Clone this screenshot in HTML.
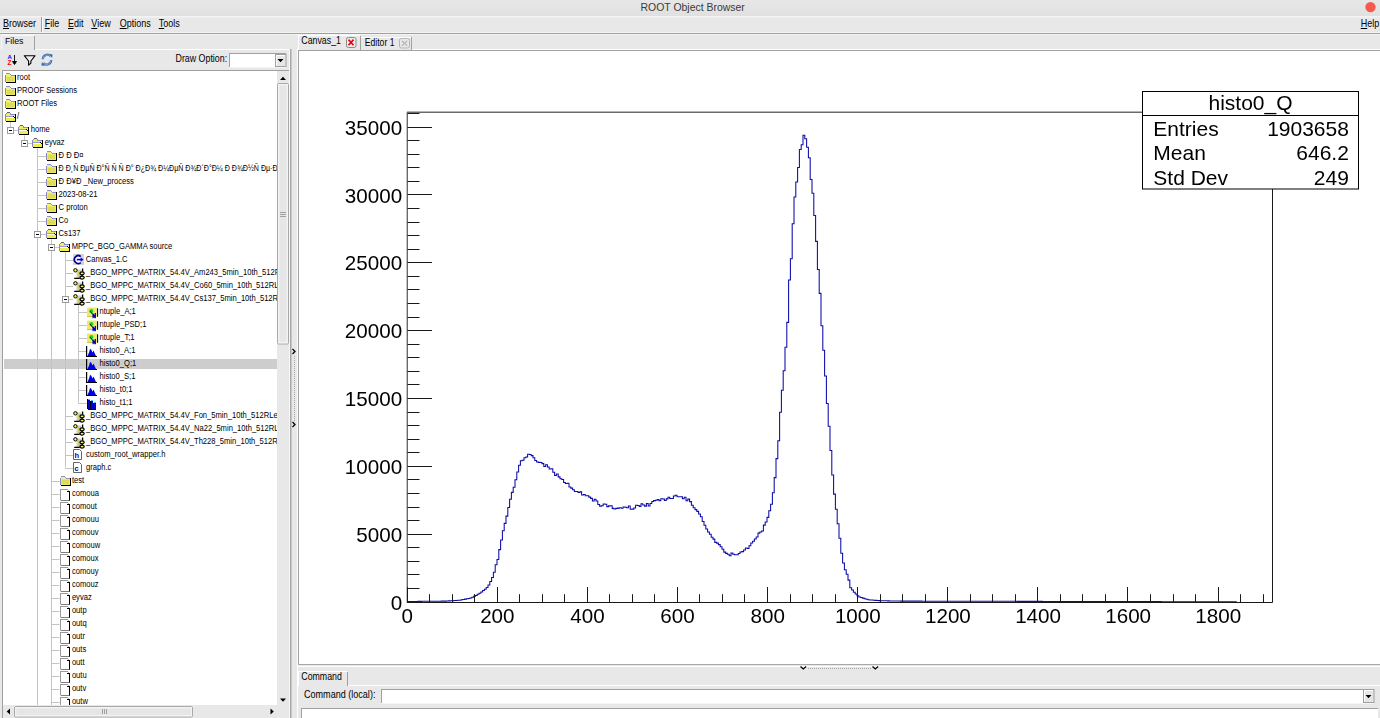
<!DOCTYPE html>
<html><head><meta charset="utf-8"><title>ROOT Object Browser</title>
<style>html,body{margin:0;padding:0;width:1380px;height:718px;overflow:hidden;background:#e8e8e8}</style>
</head><body>
<svg width="1380" height="718" viewBox="0 0 1380 718" style="position:absolute;left:0;top:0;font-family:'Liberation Sans',sans-serif">
<defs>
<linearGradient id="tb" x1="0" y1="0" x2="0" y2="1"><stop offset="0" stop-color="#e7e7e7"/><stop offset="1" stop-color="#e0e0e0"/></linearGradient>
<symbol id="fc" viewBox="0 0 11 10" shape-rendering="crispEdges"><rect x="0" y="2" width="1" height="7" fill="#8a8ac0"/><rect x="1" y="0" width="4" height="1" fill="#9090c4"/><rect x="5" y="1" width="1" height="1" fill="#9090c4"/><rect x="6" y="2" width="4" height="1" fill="#9090c4"/><rect x="1" y="1" width="4" height="1" fill="#eeee70"/><rect x="1" y="2" width="5" height="1" fill="#f2f290"/><rect x="1" y="3" width="9" height="6" fill="#eaea62"/><rect x="2" y="4" width="7" height="4" fill="#dcdc5a"/><rect x="10" y="2" width="1" height="8" fill="#000"/><rect x="1" y="9" width="10" height="1" fill="#000"/></symbol>
<symbol id="fo" viewBox="0 0 11 10" shape-rendering="crispEdges"><rect x="2" y="0" width="3" height="1" fill="#606070"/><rect x="1" y="1" width="1" height="1" fill="#8a8ac0"/><rect x="2" y="1" width="3" height="1" fill="#eeee70"/><rect x="5" y="1" width="1" height="1" fill="#8a8ac0"/><rect x="0" y="2" width="1" height="7" fill="#8a8ac0"/><rect x="1" y="2" width="4" height="2" fill="#eeee60"/><rect x="5" y="2" width="5" height="1" fill="#8a8ac0"/><rect x="5" y="3" width="5" height="1" fill="#eeee60"/><rect x="1" y="4" width="8" height="1" fill="#9a9ad0"/><rect x="1" y="5" width="8" height="1" fill="#fbfbf0"/><rect x="1" y="6" width="9" height="3" fill="#eeee50"/><rect x="10" y="2" width="1" height="8" fill="#000"/><rect x="8" y="4" width="1" height="1" fill="#000"/><rect x="9" y="5" width="1" height="1" fill="#000"/><rect x="1" y="9" width="10" height="1" fill="#000"/></symbol>
<symbol id="mb" viewBox="0 0 7 7" shape-rendering="crispEdges"><rect x="0" y="0" width="7" height="7" fill="#9a9a9a"/><rect x="1" y="1" width="5" height="5" fill="#fff"/><rect x="2" y="3" width="3" height="1" fill="#000"/></symbol>
<symbol id="rf" viewBox="0 0 14 12"><rect x="3.5" y="1.5" width="5" height="9" fill="#d0d0d0"/><path d="M4 2.5Q6 3.5 6 6V10" stroke="#c8c830" stroke-width="1" fill="none"/><circle cx="2.4" cy="2.3" r="1.7" fill="#f0f050" stroke="#000" stroke-width="1"/><ellipse cx="9.1" cy="5.3" rx="2.1" ry="1.5" fill="#f0f050" stroke="#000" stroke-width="1.2"/><ellipse cx="9.1" cy="9.6" rx="2.1" ry="1.5" fill="#f0f050" stroke="#000" stroke-width="1.2"/><path d="M9.6 0.6v3.2 M9.1 6.8v1.4 M1.2 10.3h5.5" stroke="#000" stroke-width="1.3"/></symbol>
<symbol id="nt" viewBox="0 0 12 12"><rect x="0.2" y="0.8" width="10" height="9.5" fill="#eaea70"/><rect x="0.2" y="9.3" width="9" height="1" fill="#c8c840"/><circle cx="4.6" cy="4.3" r="2.1" fill="#20d020"/><path d="M3.6 4.6l2.6 3.4" stroke="#000" stroke-width="1"/><path d="M6.4 7v4.5M8.6 6.2v5.3M6.4 7l2.2 4.5" stroke="#0000c8" stroke-width="1.3"/><path d="M10.9 1.5v8.5" stroke="#000" stroke-width="1.1"/></symbol>
<symbol id="hi" viewBox="0 0 12 11"><rect x="0" y="0" width="1.2" height="11" fill="#000"/><rect x="0" y="10" width="11" height="1" fill="#000"/><path d="M1.5 10L3 6.5 4 3 5.2 3.5 6.5 6.5 7.5 4.5 8.8 7.5 10 10z" fill="#0000e8"/></symbol>
<symbol id="h2" viewBox="0 0 12 12" shape-rendering="crispEdges"><rect x="2" y="11" width="8" height="1" fill="#000"/><rect x="1" y="1" width="1" height="10" fill="#000"/><rect x="2" y="1" width="2" height="10" fill="#0000d0"/><rect x="5" y="2" width="2" height="9" fill="#0000e0"/><rect x="8" y="4" width="2" height="7" fill="#0000d0"/><rect x="2" y="1" width="2" height="1" fill="#30c8ff"/><rect x="5" y="2" width="2" height="1" fill="#30c8ff"/><rect x="8" y="4" width="2" height="1" fill="#30c8ff"/><rect x="4" y="3" width="1" height="8" fill="#000"/><rect x="7" y="5" width="1" height="6" fill="#000"/></symbol>
<symbol id="cc" viewBox="0 0 11 11"><rect x="0" y="0" width="11" height="11" fill="#d4d4d4"/><path d="M7.8 2.6A3.9 3.9 0 1 0 7.8 8.6" fill="#fff" stroke="#00009a" stroke-width="1.7"/><path d="M3.8 5.6h4.5" stroke="#0000ff" stroke-width="1.6"/><path d="M7.6 3.4l3 2.2-3 2.2z" fill="#0000ff"/></symbol>
<symbol id="hf" viewBox="0 0 9 11"><path d="M0.5 0.5h6l2 2v8h-8z" fill="#fff" stroke="#555" stroke-width="0.9"/><text x="1.6" y="8.8" font-size="7.5" fill="#0000a0" font-family="Liberation Sans" font-weight="bold">h</text></symbol>
<symbol id="cf" viewBox="0 0 9 11"><path d="M0.5 0.5h6l2 2v8h-8z" fill="#fff" stroke="#555" stroke-width="0.9"/><text x="1.6" y="8.8" font-size="7.5" fill="#0000a0" font-family="Liberation Sans" font-weight="bold">c</text></symbol>
<symbol id="df" viewBox="0 0 10 12" shape-rendering="crispEdges"><rect x="1" y="1" width="8" height="10" fill="#fff"/><rect x="0" y="0" width="1" height="12" fill="#9a9a9a"/><rect x="1" y="0" width="7" height="1" fill="#9a9a9a"/><rect x="8" y="1" width="1" height="1" fill="#b0b0b0"/><rect x="7" y="2" width="2" height="1" fill="#000"/><rect x="9" y="2" width="1" height="10" fill="#000"/><rect x="1" y="11" width="9" height="1" fill="#000"/></symbol>
</defs>
<rect x="0" y="0" width="1380" height="718" fill="#e8e8e8"/>
<rect x="0" y="0" width="1380" height="16" fill="url(#tb)"/>
<rect x="0" y="16" width="1380" height="1" fill="#f3f3f3"/>
<rect x="0" y="17" width="1380" height="1" fill="#efefef"/>
<text x="640.5" y="10.8" font-size="11.1" fill="#3a3a3a" text-anchor="start"  textLength="104.33" lengthAdjust="spacingAndGlyphs">ROOT Object Browser</text>
<circle cx="1370.5" cy="7.1" r="5.2" fill="#f45b4c"/>
<text x="3" y="27.2" font-size="10.3" fill="#000" text-anchor="start"  textLength="33.01" lengthAdjust="spacingAndGlyphs">Browser</text>
<text x="44.7" y="27.2" font-size="10.3" fill="#000" text-anchor="start"  textLength="14.50" lengthAdjust="spacingAndGlyphs">File</text>
<text x="68" y="27.2" font-size="10.3" fill="#000" text-anchor="start"  textLength="15.51" lengthAdjust="spacingAndGlyphs">Edit</text>
<text x="91.3" y="27.2" font-size="10.3" fill="#000" text-anchor="start"  textLength="19.34" lengthAdjust="spacingAndGlyphs">View</text>
<text x="119.7" y="27.2" font-size="10.3" fill="#000" text-anchor="start"  textLength="31.02" lengthAdjust="spacingAndGlyphs">Options</text>
<text x="158.7" y="27.2" font-size="10.3" fill="#000" text-anchor="start"  textLength="21.01" lengthAdjust="spacingAndGlyphs">Tools</text>
<text x="1360.7" y="27.2" font-size="10.3" fill="#000" text-anchor="start"  textLength="18.51" lengthAdjust="spacingAndGlyphs">Help</text>
<rect x="3" y="28" width="6" height="1" fill="#000"/>
<rect x="44.7" y="28" width="5.0" height="1" fill="#000"/>
<rect x="68" y="28" width="5.5" height="1" fill="#000"/>
<rect x="91.3" y="28" width="6.0" height="1" fill="#000"/>
<rect x="119.7" y="28" width="7.0" height="1" fill="#000"/>
<rect x="158.7" y="28" width="5.5" height="1" fill="#000"/>
<rect x="1360.7" y="28" width="6.5" height="1" fill="#000"/>
<rect x="41" y="17" width="1" height="16" fill="#a0a0a0"/>
<rect x="42" y="17" width="1" height="16" fill="#ffffff"/>
<rect x="0" y="32" width="1380" height="1" fill="#f2f2f2"/>
<rect x="0" y="33" width="1380" height="1" fill="#a0a0a0"/>
<rect x="0" y="34" width="1380" height="1" fill="#f4f4f4"/>
<rect x="2" y="35" width="33" height="15" fill="#e8e8e8"/>
<rect x="2" y="35" width="32" height="1" fill="#f8f8f8"/>
<rect x="1" y="36" width="1" height="14" fill="#f6f6f6"/>
<rect x="34" y="36" width="1" height="14" fill="#a0a0a0"/>
<text x="5" y="43.7" font-size="9.5" fill="#000" text-anchor="start"  textLength="18.47" lengthAdjust="spacingAndGlyphs">Files</text>
<rect x="35" y="49" width="254" height="1" fill="#ffffff"/>
<text x="7.5" y="59" font-size="6" fill="#0000ff" font-weight="bold">A</text><text x="7.5" y="65" font-size="6.5" fill="#ff0000" font-weight="bold">Z</text>
<path d="M14.5 55v9M12.5 61.5l2 3 2-3z" stroke="#000" stroke-width="0.9" fill="#000"/>
<path d="M24.3 55.7h10.8l-4.2 5.3v2.2l-2.3 2v-4.2z" fill="#f0f0f0" stroke="#000" stroke-width="1.1" stroke-linejoin="round"/>
<g fill="none" stroke="#2a62b0" stroke-width="2.2"><path d="M42.8 59.3a4.6 4.6 0 0 1 8-3"/><path d="M51.2 60a4.6 4.6 0 0 1-8 3"/></g><g fill="none" stroke="#cfe0f4" stroke-width="0.6"><path d="M42.8 59.3a4.6 4.6 0 0 1 8-3"/><path d="M51.2 60a4.6 4.6 0 0 1-8 3"/></g><path d="M49.5 54.2l3 0.2-0.4 3.6z M44.5 65.8l-3-0.2 0.4-3.6z" fill="#2a62b0"/>
<text x="175.5" y="61.8" font-size="10.6" fill="#000" text-anchor="start"  textLength="51.64" lengthAdjust="spacingAndGlyphs">Draw Option:</text>
<rect x="229" y="53.5" width="57" height="14" fill="#ffffff"/>
<rect x="229" y="53" width="57" height="1" fill="#a0a0a0"/>
<rect x="229" y="53" width="1" height="14" fill="#a0a0a0"/>
<rect x="275.5" y="54.5" width="10.5" height="12" fill="#e6e6e6" stroke="#a0a0a0" stroke-width="1"/><path d="M276.5 65.5V55.5H285" stroke="#fff" stroke-width="1" fill="none"/>
<path d="M277.5 59h6l-3 3.3z" fill="#000"/>
<rect x="2" y="70" width="287" height="1" fill="#a0a0a0"/>
<rect x="2" y="70" width="1" height="648" fill="#a0a0a0"/>
<rect x="3" y="71" width="274" height="634" fill="#ffffff"/>
<rect x="277" y="71" width="12" height="634" fill="#e8e8e8"/>
<path d="M280 80h6l-3-3.3z" fill="#000"/>
<rect x="277.5" y="83.5" width="11" height="260.5" rx="1.2" fill="#e6e6e6" stroke="#a8a8a8" stroke-width="1"/><rect x="278.8" y="84.8" width="8.4" height="258" fill="none" stroke="#fafafa" stroke-width="0.9"/>
<rect x="280" y="212" width="6" height="1" fill="#a0a0a0"/>
<rect x="280" y="214" width="6" height="1" fill="#a0a0a0"/>
<rect x="280" y="216" width="6" height="1" fill="#a0a0a0"/>
<path d="M280 698.5h6l-3 3.3z" fill="#000"/>
<rect x="3" y="705" width="286" height="13" fill="#e8e8e8"/>
<path d="M10 708.5l-3.3 3 3.3 3z" fill="#000"/>
<path d="M270.5 708.5l3.3 3-3.3 3z" fill="#000"/>
<rect x="14.5" y="706.5" width="178" height="10.5" rx="1.2" fill="#e6e6e6" stroke="#a8a8a8" stroke-width="1"/><rect x="15.8" y="707.8" width="175.5" height="8" fill="none" stroke="#fafafa" stroke-width="0.9"/>
<rect x="102" y="709" width="1" height="5" fill="#a0a0a0"/>
<rect x="104" y="709" width="1" height="5" fill="#a0a0a0"/>
<rect x="106" y="709" width="1" height="5" fill="#a0a0a0"/>
<g clip-path="url(#treeclip)">
<clipPath id="treeclip"><rect x="3" y="71" width="274" height="634"/></clipPath>
<rect x="4" y="359" width="273" height="10" fill="#cdcdcd"/>
<rect x="24" y="135.5" width="1" height="7.0" fill="#c4c4c4"/>
<rect x="37" y="148.5" width="1" height="569.5" fill="#c4c4c4"/>
<rect x="51" y="239.5" width="1" height="478.5" fill="#c4c4c4"/>
<rect x="65" y="252.5" width="1" height="215.0" fill="#c4c4c4"/>
<rect x="78" y="304.5" width="1" height="98.0" fill="#c4c4c4"/>
<rect x="10" y="130" width="8" height="1" fill="#c4c4c4"/>
<rect x="24" y="143" width="8" height="1" fill="#c4c4c4"/>
<rect x="37" y="156" width="9" height="1" fill="#c4c4c4"/>
<rect x="37" y="169" width="9" height="1" fill="#c4c4c4"/>
<rect x="37" y="182" width="9" height="1" fill="#c4c4c4"/>
<rect x="37" y="195" width="9" height="1" fill="#c4c4c4"/>
<rect x="37" y="208" width="9" height="1" fill="#c4c4c4"/>
<rect x="37" y="221" width="9" height="1" fill="#c4c4c4"/>
<rect x="37" y="234" width="9" height="1" fill="#c4c4c4"/>
<rect x="51" y="247" width="8.5" height="1" fill="#c4c4c4"/>
<rect x="65" y="260" width="8" height="1" fill="#c4c4c4"/>
<rect x="65" y="273" width="8" height="1" fill="#c4c4c4"/>
<rect x="65" y="286" width="8" height="1" fill="#c4c4c4"/>
<rect x="65" y="299" width="8" height="1" fill="#c4c4c4"/>
<rect x="78" y="312" width="9" height="1" fill="#c4c4c4"/>
<rect x="78" y="325" width="9" height="1" fill="#c4c4c4"/>
<rect x="78" y="338" width="9" height="1" fill="#c4c4c4"/>
<rect x="78" y="351" width="9" height="1" fill="#c4c4c4"/>
<rect x="78" y="364" width="9" height="1" fill="#c4c4c4"/>
<rect x="78" y="377" width="9" height="1" fill="#c4c4c4"/>
<rect x="78" y="390" width="9" height="1" fill="#c4c4c4"/>
<rect x="78" y="403" width="9" height="1" fill="#c4c4c4"/>
<rect x="65" y="416" width="8" height="1" fill="#c4c4c4"/>
<rect x="65" y="429" width="8" height="1" fill="#c4c4c4"/>
<rect x="65" y="442" width="8" height="1" fill="#c4c4c4"/>
<rect x="65" y="455" width="8" height="1" fill="#c4c4c4"/>
<rect x="65" y="468" width="8" height="1" fill="#c4c4c4"/>
<rect x="51" y="481" width="8.5" height="1" fill="#c4c4c4"/>
<rect x="51" y="494" width="8.5" height="1" fill="#c4c4c4"/>
<rect x="51" y="507" width="8.5" height="1" fill="#c4c4c4"/>
<rect x="51" y="520" width="8.5" height="1" fill="#c4c4c4"/>
<rect x="51" y="533" width="8.5" height="1" fill="#c4c4c4"/>
<rect x="51" y="546" width="8.5" height="1" fill="#c4c4c4"/>
<rect x="51" y="559" width="8.5" height="1" fill="#c4c4c4"/>
<rect x="51" y="572" width="8.5" height="1" fill="#c4c4c4"/>
<rect x="51" y="585" width="8.5" height="1" fill="#c4c4c4"/>
<rect x="51" y="598" width="8.5" height="1" fill="#c4c4c4"/>
<rect x="51" y="611" width="8.5" height="1" fill="#c4c4c4"/>
<rect x="51" y="624" width="8.5" height="1" fill="#c4c4c4"/>
<rect x="51" y="637" width="8.5" height="1" fill="#c4c4c4"/>
<rect x="51" y="650" width="8.5" height="1" fill="#c4c4c4"/>
<rect x="51" y="663" width="8.5" height="1" fill="#c4c4c4"/>
<rect x="51" y="676" width="8.5" height="1" fill="#c4c4c4"/>
<rect x="51" y="689" width="8.5" height="1" fill="#c4c4c4"/>
<rect x="51" y="702" width="8.5" height="1" fill="#c4c4c4"/>
<rect x="10" y="122" width="1" height="5" fill="#c4c4c4"/>
<use href="#fc" x="5" y="73.0" width="11" height="10"/>
<text x="17" y="80.2" font-size="8.9" fill="#000" text-anchor="start"  textLength="13.10" lengthAdjust="spacingAndGlyphs">root</text>
<use href="#fc" x="5" y="86.0" width="11" height="10"/>
<text x="17" y="93.2" font-size="8.9" fill="#000" text-anchor="start"  textLength="59.97" lengthAdjust="spacingAndGlyphs">PROOF Sessions</text>
<use href="#fc" x="5" y="99.0" width="11" height="10"/>
<text x="17" y="106.2" font-size="8.9" fill="#000" text-anchor="start"  textLength="39.97" lengthAdjust="spacingAndGlyphs">ROOT Files</text>
<use href="#fo" x="5" y="112.0" width="11" height="10"/>
<text x="17" y="119.2" font-size="8.9" fill="#000" text-anchor="start"  textLength="2.11" lengthAdjust="spacingAndGlyphs">/</text>
<use href="#mb" x="7" y="127.0" width="7" height="7"/>
<use href="#fo" x="18" y="125.0" width="11" height="10"/>
<text x="30.8" y="132.2" font-size="8.9" fill="#000" text-anchor="start"  textLength="19.01" lengthAdjust="spacingAndGlyphs">home</text>
<use href="#mb" x="21" y="140.0" width="7" height="7"/>
<use href="#fo" x="32" y="138.0" width="11" height="10"/>
<text x="44.7" y="145.2" font-size="8.9" fill="#000" text-anchor="start"  textLength="19.85" lengthAdjust="spacingAndGlyphs">eyvaz</text>
<use href="#fc" x="46" y="151.0" width="11" height="10"/>
<text x="58.6" y="158.2" font-size="8.9" fill="#000" text-anchor="start"  textLength="24.92" lengthAdjust="spacingAndGlyphs">Ð Ð Ð¤</text>
<use href="#fc" x="46" y="164.0" width="11" height="10"/>
<text x="58.6" y="171.2" font-size="8.9" fill="#000" text-anchor="start"  textLength="226.07" lengthAdjust="spacingAndGlyphs">Ð Ð¸Ñ ÐµÑ Ð°Ñ Ñ Ñ Ð° Ð¿Ð¾ Ð¼ÐµÑ Ð¾Ð´Ð°Ð¼ Ð Ð¾Ð½Ñ Ðµ·Ð Ð</text>
<use href="#fc" x="46" y="177.0" width="11" height="10"/>
<text x="58.6" y="184.2" font-size="8.9" fill="#000" text-anchor="start"  textLength="75.18" lengthAdjust="spacingAndGlyphs">Ð Ð¥Ð _New_process</text>
<use href="#fc" x="46" y="190.0" width="11" height="10"/>
<text x="58.6" y="197.2" font-size="8.9" fill="#000" text-anchor="start"  textLength="38.88" lengthAdjust="spacingAndGlyphs">2023-08-21</text>
<use href="#fc" x="46" y="203.0" width="11" height="10"/>
<text x="58.6" y="210.2" font-size="8.9" fill="#000" text-anchor="start"  textLength="29.15" lengthAdjust="spacingAndGlyphs">C proton</text>
<use href="#fc" x="46" y="216.0" width="11" height="10"/>
<text x="58.6" y="223.2" font-size="8.9" fill="#000" text-anchor="start"  textLength="9.72" lengthAdjust="spacingAndGlyphs">Co</text>
<use href="#mb" x="34" y="231.0" width="7" height="7"/>
<use href="#fo" x="46" y="229.0" width="11" height="10"/>
<text x="58.6" y="236.2" font-size="8.9" fill="#000" text-anchor="start"  textLength="21.97" lengthAdjust="spacingAndGlyphs">Cs137</text>
<use href="#mb" x="48" y="244.0" width="7" height="7"/>
<use href="#fo" x="59" y="242.0" width="11" height="10"/>
<text x="71.7" y="249.2" font-size="8.9" fill="#000" text-anchor="start"  textLength="100.52" lengthAdjust="spacingAndGlyphs">MPPC_BGO_GAMMA source</text>
<use href="#cc" x="73" y="254.0" width="11" height="11"/>
<text x="85.7" y="262.2" font-size="8.9" fill="#000" text-anchor="start"  textLength="41.82" lengthAdjust="spacingAndGlyphs">Canvas_1.C</text>
<use href="#rf" x="73" y="268.0" width="14" height="12"/>
<text x="86" y="275.2" font-size="8.9" fill="#000" text-anchor="start"  textLength="206.87" lengthAdjust="spacingAndGlyphs">_BGO_MPPC_MATRIX_54.4V_Am243_5min_10th_512RLen</text>
<use href="#rf" x="73" y="281.0" width="14" height="12"/>
<text x="86" y="288.2" font-size="8.9" fill="#000" text-anchor="start"  textLength="200.96" lengthAdjust="spacingAndGlyphs">_BGO_MPPC_MATRIX_54.4V_Co60_5min_10th_512RLen</text>
<use href="#mb" x="62" y="296.0" width="7" height="7"/>
<use href="#rf" x="73" y="294.0" width="14" height="12"/>
<text x="86" y="301.2" font-size="8.9" fill="#000" text-anchor="start"  textLength="204.76" lengthAdjust="spacingAndGlyphs">_BGO_MPPC_MATRIX_54.4V_Cs137_5min_10th_512RLen</text>
<use href="#nt" x="86.7" y="306.7" width="12" height="12"/>
<text x="99.5" y="314.2" font-size="8.9" fill="#000" text-anchor="start"  textLength="36.34" lengthAdjust="spacingAndGlyphs">ntuple_A;1</text>
<use href="#nt" x="86.7" y="319.7" width="12" height="12"/>
<text x="99.5" y="327.2" font-size="8.9" fill="#000" text-anchor="start"  textLength="46.90" lengthAdjust="spacingAndGlyphs">ntuple_PSD;1</text>
<use href="#nt" x="86.7" y="332.7" width="12" height="12"/>
<text x="99.5" y="340.2" font-size="8.9" fill="#000" text-anchor="start"  textLength="35.07" lengthAdjust="spacingAndGlyphs">ntuple_T;1</text>
<use href="#hi" x="86" y="346.0" width="12" height="11"/>
<text x="99.5" y="353.2" font-size="8.9" fill="#000" text-anchor="start"  textLength="35.91" lengthAdjust="spacingAndGlyphs">histo0_A;1</text>
<use href="#hi" x="86" y="359.0" width="12" height="11"/>
<text x="99.5" y="366.2" font-size="8.9" fill="#000" text-anchor="start"  textLength="36.76" lengthAdjust="spacingAndGlyphs">histo0_Q;1</text>
<use href="#hi" x="86" y="372.0" width="12" height="11"/>
<text x="99.5" y="379.2" font-size="8.9" fill="#000" text-anchor="start"  textLength="35.91" lengthAdjust="spacingAndGlyphs">histo0_S;1</text>
<use href="#hi" x="86" y="385.0" width="12" height="11"/>
<text x="99.5" y="392.2" font-size="8.9" fill="#000" text-anchor="start"  textLength="32.96" lengthAdjust="spacingAndGlyphs">histo_t0;1</text>
<use href="#h2" x="86" y="398.0" width="12" height="12"/>
<text x="99.5" y="405.2" font-size="8.9" fill="#000" text-anchor="start"  textLength="32.96" lengthAdjust="spacingAndGlyphs">histo_t1;1</text>
<use href="#rf" x="73" y="411.0" width="14" height="12"/>
<text x="86" y="418.2" font-size="8.9" fill="#000" text-anchor="start"  textLength="195.88" lengthAdjust="spacingAndGlyphs">_BGO_MPPC_MATRIX_54.4V_Fon_5min_10th_512RLen</text>
<use href="#rf" x="73" y="424.0" width="14" height="12"/>
<text x="86" y="431.2" font-size="8.9" fill="#000" text-anchor="start"  textLength="200.96" lengthAdjust="spacingAndGlyphs">_BGO_MPPC_MATRIX_54.4V_Na22_5min_10th_512RLen</text>
<use href="#rf" x="73" y="437.0" width="14" height="12"/>
<text x="86" y="444.2" font-size="8.9" fill="#000" text-anchor="start"  textLength="204.34" lengthAdjust="spacingAndGlyphs">_BGO_MPPC_MATRIX_54.4V_Th228_5min_10th_512RLen</text>
<use href="#hf" x="73" y="449.0" width="9" height="11"/>
<text x="86" y="457.2" font-size="8.9" fill="#000" text-anchor="start"  textLength="79.42" lengthAdjust="spacingAndGlyphs">custom_root_wrapper.h</text>
<use href="#cf" x="73" y="462.0" width="9" height="11"/>
<text x="86" y="470.2" font-size="8.9" fill="#000" text-anchor="start"  textLength="25.35" lengthAdjust="spacingAndGlyphs">graph.c</text>
<use href="#fc" x="60" y="476.0" width="11" height="10"/>
<text x="71.9" y="483.2" font-size="8.9" fill="#000" text-anchor="start"  textLength="12.25" lengthAdjust="spacingAndGlyphs">test</text>
<use href="#df" x="60" y="488.5" width="10" height="12"/>
<text x="71.9" y="496.2" font-size="8.9" fill="#000" text-anchor="start"  textLength="27.04" lengthAdjust="spacingAndGlyphs">comoua</text>
<use href="#df" x="60" y="501.5" width="10" height="12"/>
<text x="71.9" y="509.2" font-size="8.9" fill="#000" text-anchor="start"  textLength="24.92" lengthAdjust="spacingAndGlyphs">comout</text>
<use href="#df" x="60" y="514.5" width="10" height="12"/>
<text x="71.9" y="522.2" font-size="8.9" fill="#000" text-anchor="start"  textLength="27.04" lengthAdjust="spacingAndGlyphs">comouu</text>
<use href="#df" x="60" y="527.5" width="10" height="12"/>
<text x="71.9" y="535.2" font-size="8.9" fill="#000" text-anchor="start"  textLength="26.61" lengthAdjust="spacingAndGlyphs">comouv</text>
<use href="#df" x="60" y="540.5" width="10" height="12"/>
<text x="71.9" y="548.2" font-size="8.9" fill="#000" text-anchor="start"  textLength="28.30" lengthAdjust="spacingAndGlyphs">comouw</text>
<use href="#df" x="60" y="553.5" width="10" height="12"/>
<text x="71.9" y="561.2" font-size="8.9" fill="#000" text-anchor="start"  textLength="26.61" lengthAdjust="spacingAndGlyphs">comoux</text>
<use href="#df" x="60" y="566.5" width="10" height="12"/>
<text x="71.9" y="574.2" font-size="8.9" fill="#000" text-anchor="start"  textLength="26.61" lengthAdjust="spacingAndGlyphs">comouy</text>
<use href="#df" x="60" y="579.5" width="10" height="12"/>
<text x="71.9" y="587.2" font-size="8.9" fill="#000" text-anchor="start"  textLength="26.61" lengthAdjust="spacingAndGlyphs">comouz</text>
<use href="#df" x="60" y="592.5" width="10" height="12"/>
<text x="71.9" y="600.2" font-size="8.9" fill="#000" text-anchor="start"  textLength="19.85" lengthAdjust="spacingAndGlyphs">eyvaz</text>
<use href="#df" x="60" y="605.5" width="10" height="12"/>
<text x="71.9" y="613.2" font-size="8.9" fill="#000" text-anchor="start"  textLength="14.79" lengthAdjust="spacingAndGlyphs">outp</text>
<use href="#df" x="60" y="618.5" width="10" height="12"/>
<text x="71.9" y="626.2" font-size="8.9" fill="#000" text-anchor="start"  textLength="14.79" lengthAdjust="spacingAndGlyphs">outq</text>
<use href="#df" x="60" y="631.5" width="10" height="12"/>
<text x="71.9" y="639.2" font-size="8.9" fill="#000" text-anchor="start"  textLength="13.10" lengthAdjust="spacingAndGlyphs">outr</text>
<use href="#df" x="60" y="644.5" width="10" height="12"/>
<text x="71.9" y="652.2" font-size="8.9" fill="#000" text-anchor="start"  textLength="14.37" lengthAdjust="spacingAndGlyphs">outs</text>
<use href="#df" x="60" y="657.5" width="10" height="12"/>
<text x="71.9" y="665.2" font-size="8.9" fill="#000" text-anchor="start"  textLength="12.68" lengthAdjust="spacingAndGlyphs">outt</text>
<use href="#df" x="60" y="670.5" width="10" height="12"/>
<text x="71.9" y="678.2" font-size="8.9" fill="#000" text-anchor="start"  textLength="14.79" lengthAdjust="spacingAndGlyphs">outu</text>
<use href="#df" x="60" y="683.5" width="10" height="12"/>
<text x="71.9" y="691.2" font-size="8.9" fill="#000" text-anchor="start"  textLength="14.37" lengthAdjust="spacingAndGlyphs">outv</text>
<use href="#df" x="60" y="696.5" width="10" height="12"/>
<text x="71.9" y="704.2" font-size="8.9" fill="#000" text-anchor="start"  textLength="16.05" lengthAdjust="spacingAndGlyphs">outw</text>
</g>
<rect x="289" y="49" width="1" height="669" fill="#f8f8f8"/>
<rect x="290" y="49" width="1" height="669" fill="#a8a8a8"/>
<rect x="291" y="49" width="1" height="669" fill="#c8c8c8"/>
<path d="M292.5 349l2.5 2.5-2.5 2.5" stroke="#000" stroke-width="1.3" fill="none"/>
<path d="M292.5 422l2.5 2.5-2.5 2.5" stroke="#000" stroke-width="1.3" fill="none"/>
<line x1="294.5" y1="356" x2="294.5" y2="421" stroke="#a8a8a8" stroke-width="1" stroke-dasharray="1 1"/>
<rect x="297" y="49" width="1" height="669" fill="#ffffff"/>
<rect x="297" y="49" width="1083" height="1" fill="#ffffff"/>
<rect x="298" y="35" width="62" height="15" fill="#e8e8e8"/>
<rect x="298" y="35" width="62" height="1" fill="#ffffff"/>
<rect x="298" y="35" width="1" height="15" fill="#ffffff"/>
<rect x="360" y="36" width="1" height="14" fill="#a0a0a0"/>
<text x="301.3" y="43.9" font-size="10.4" fill="#000" text-anchor="start"  textLength="39.63" lengthAdjust="spacingAndGlyphs">Canvas_1</text>
<rect x="346.5" y="37.5" width="9.5" height="10" rx="1.8" fill="#ececec" stroke="#8a8a8a" stroke-width="1"/>
<path d="M348.5 39.6l5 5.6M353.5 39.6l-5 5.6" stroke="#e80000" stroke-width="1.6"/>
<rect x="361" y="37" width="51" height="13" fill="#e8e8e8"/>
<rect x="361" y="37" width="50" height="1" fill="#ffffff"/>
<rect x="411" y="37" width="1" height="13" fill="#a0a0a0"/>
<text x="364.8" y="45.7" font-size="10.4" fill="#000" text-anchor="start"  textLength="29.64" lengthAdjust="spacingAndGlyphs">Editor 1</text>
<rect x="399.5" y="38.5" width="10" height="9.5" rx="1.8" fill="#e8e8e8" stroke="#b4b4b4" stroke-width="1"/>
<path d="M401.8 40.8l5.4 5M407.2 40.8l-5.4 5" stroke="#b8b8b8" stroke-width="1.3"/>
<rect x="298" y="50" width="1082" height="1" fill="#a0a0a0"/>
<rect x="298" y="50" width="1" height="614" fill="#a0a0a0"/>
<rect x="299" y="51" width="1081" height="613" fill="#ffffff"/>
<rect x="298" y="664" width="1082" height="1" fill="#a8a8a8"/>
<rect x="298" y="666" width="1082" height="1" fill="#ffffff"/>
<path d="M800.5 666.5l2.8 2.5 2.8-2.5" stroke="#000" stroke-width="1.3" fill="none"/>
<path d="M872.5 666.5l2.8 2.5 2.8-2.5" stroke="#000" stroke-width="1.3" fill="none"/>
<line x1="808" y1="668.5" x2="871" y2="668.5" stroke="#a8a8a8" stroke-width="1" stroke-dasharray="1 1"/>
<rect x="298" y="671" width="50" height="15" fill="#e8e8e8"/>
<rect x="298" y="671" width="49" height="1" fill="#ffffff"/>
<rect x="298" y="671" width="1" height="15" fill="#ffffff"/>
<rect x="347" y="672" width="1" height="14" fill="#a0a0a0"/>
<text x="301.3" y="679.5" font-size="10.2" fill="#000" text-anchor="start"  textLength="40.59" lengthAdjust="spacingAndGlyphs">Command</text>
<rect x="348" y="685" width="1032" height="1" fill="#ffffff"/>
<text x="304" y="697.6" font-size="10.3" fill="#000" text-anchor="start"  textLength="71.42" lengthAdjust="spacingAndGlyphs">Command (local):</text>
<rect x="381" y="689" width="993" height="14" fill="#ffffff"/>
<rect x="381" y="689" width="993" height="1" fill="#a0a0a0"/>
<rect x="381" y="689" width="1" height="14" fill="#a0a0a0"/>
<rect x="381" y="703" width="993" height="1" fill="#f4f4f4"/>
<rect x="1363.5" y="689.5" width="10.5" height="13" fill="#e6e6e6" stroke="#a0a0a0" stroke-width="1"/><path d="M1364.5 701.5V690.5H1373" stroke="#fff" stroke-width="1" fill="none"/>
<path d="M1365.5 695h6l-3 3.3z" fill="#000"/>
<rect x="301" y="708" width="1077" height="1" fill="#a0a0a0"/>
<rect x="301" y="708" width="1" height="10" fill="#a0a0a0"/>
<rect x="302" y="709" width="1076" height="9" fill="#ffffff"/>
</svg>
<svg width="1081" height="613" viewBox="299 51 1081 613" style="position:absolute;left:299px;top:51px;will-change:transform;font-family:'Liberation Sans',sans-serif"><g>
<path d="M407.00 601.49H407.00V601.49H408.80V601.47H410.60V601.45H412.40V601.44H414.20V601.42H416.00V601.40H417.80V601.38H419.60V601.36H421.40V601.34H423.20V601.32H425.00V601.31H426.80V601.29H428.60V601.27H430.40V601.25H432.20V601.23H434.00V601.21H435.80V601.20H437.60V601.18H439.40V601.16H441.20V601.14H443.00V601.12H444.80V601.10H446.60V601.00H448.40V600.89H450.20V600.77H452.00V600.66H453.80V600.54H455.60V600.43H457.40V600.31H459.20V600.18H461.00V599.83H462.80V599.48H464.60V599.13H466.40V598.78H468.20V598.43H470.00V598.08H471.80V597.30H473.60V596.32H475.40V595.51H477.20V594.29H479.00V593.25H480.80V591.92H482.60V590.50H484.40V589.34H486.20V587.44H488.00V584.93H489.80V581.48H491.60V577.43H493.40V572.17H495.20V564.73H497.00V559.51H498.80V549.60H500.60V539.91H502.40V530.74H504.20V523.35H506.00V516.13H507.80V507.47H509.60V499.23H511.40V492.36H513.20V487.22H515.00V479.76H516.80V471.93H518.60V465.34H520.40V460.84H522.20V460.33H524.00V457.78H525.80V456.95H527.60V454.20H529.40V454.58H531.20V455.61H533.00V457.70H534.80V460.58H536.60V462.05H538.40V462.36H540.20V462.42H542.00V463.64H543.80V466.46H545.60V464.66H547.40V467.00H549.20V469.02H551.00V468.70H552.80V472.16H554.60V475.45H556.40V474.07H558.20V476.87H560.00V478.70H561.80V479.45H563.60V482.54H565.40V483.47H567.20V483.25H569.00V487.04H570.80V488.11H572.60V489.67H574.40V491.47H576.20V491.52H578.00V492.45H579.80V491.87H581.60V494.94H583.40V494.58H585.20V495.73H587.00V495.84H588.80V497.14H590.60V498.37H592.40V500.94H594.20V499.20H596.00V501.08H597.80V504.42H599.60V506.13H601.40V505.69H603.20V503.94H605.00V504.30H606.80V506.63H608.60V505.87H610.40V505.84H612.20V508.39H614.00V508.91H615.80V508.35H617.60V508.11H619.40V507.69H621.20V508.24H623.00V506.95H624.80V507.26H626.60V507.71H628.40V505.96H630.20V509.28H632.00V509.12H633.80V508.03H635.60V505.23H637.40V505.51H639.20V506.37H641.00V503.75H642.80V505.01H644.60V506.10H646.40V503.55H648.20V505.95H650.00V503.56H651.80V501.46H653.60V500.60H655.40V500.19H657.20V499.63H659.00V500.72H660.80V498.80H662.60V499.06H664.40V500.57H666.20V498.85H668.00V497.24H669.80V498.55H671.60V498.47H673.40V496.07H675.20V495.20H677.00V496.67H678.80V496.78H680.60V496.75H682.40V498.71H684.20V497.20H686.00V500.72H687.80V499.14H689.60V501.64H691.40V505.22H693.20V507.82H695.00V509.64H696.80V511.36H698.60V513.92H700.40V516.69H702.20V521.45H704.00V525.20H705.80V529.00H707.60V531.95H709.40V534.15H711.20V537.20H713.00V539.13H714.80V542.36H716.60V543.12H718.40V544.63H720.20V546.83H722.00V549.27H723.80V552.13H725.60V553.35H727.40V554.24H729.20V555.65H731.00V553.08H732.80V554.16H734.60V554.84H736.40V554.65H738.20V553.58H740.00V551.94H741.80V551.61H743.60V549.97H745.40V547.92H747.20V548.48H749.00V545.72H750.80V542.98H752.60V541.21H754.40V538.97H756.20V536.97H758.00V533.14H759.80V532.02H761.60V531.05H763.40V525.10H765.20V521.90H767.00V517.38H768.80V510.76H770.60V504.17H772.40V492.78H774.20V477.64H776.00V458.64H777.80V440.79H779.60V412.17H781.40V390.27H783.20V370.76H785.00V347.34H786.80V322.37H788.60V279.90H790.40V258.80H792.20V223.74H794.00V197.00H795.80V181.94H797.60V167.59H799.40V149.49H801.20V144.67H803.00V135.20H804.80V138.67H806.60V147.34H808.40V157.82H810.20V179.46H812.00V193.19H813.80V215.58H815.60V241.39H817.40V269.47H819.20V293.37H821.00V325.66H822.80V350.16H824.60V376.03H826.40V403.59H828.20V426.19H830.00V450.50H831.80V475.00H833.60V494.12H835.40V509.33H837.20V523.76H839.00V538.19H840.80V553.23H842.60V563.07H844.40V569.77H846.20V574.31H848.00V580.12H849.80V587.73H851.60V589.99H853.40V592.20H855.20V593.96H857.00V595.72H858.80V597.01H860.60V597.57H862.40V598.12H864.20V598.67H866.00V599.22H867.80V599.77H869.60V599.93H871.40V600.07H873.20V600.21H875.00V600.35H876.80V600.48H878.60V600.62H880.40V600.72H882.20V600.75H884.00V600.79H885.80V600.83H887.60V600.86H889.40V600.90H891.20V600.94H893.00V600.97H894.80V601.01H896.60V601.05H898.40V601.09H900.20V601.10H902.00V601.11H903.80V601.11H905.60V601.11H907.40V601.12H909.20V601.12H911.00V601.12H912.80V601.13H914.60V601.13H916.40V601.14H918.20V601.14H920.00V601.14H921.80V601.15H923.60V601.15H925.40V601.15H927.20V601.16H929.00V601.16H930.80V601.17H932.60V601.17H934.40V601.17H936.20V601.18H938.00V601.18H939.80V601.18H941.60V601.19H943.40V601.19H945.20V601.20H947.00V601.20H948.80V601.20H950.60V601.21H952.40V601.21H954.20V601.21H956.00V601.22H957.80V601.22H959.60V601.23H961.40V601.23H963.20V601.23H965.00V601.24H966.80V601.24H968.60V601.24H970.40V601.25H972.20V601.25H974.00V601.26H975.80V601.26H977.60V601.26H979.40V601.27H981.20V601.27H983.00V601.27H984.80V601.28H986.60V601.28H988.40V601.29H990.20V601.29H992.00V601.29H993.80V601.30H995.60V601.30H997.40V601.30H999.20V601.31H1001.00V601.31H1002.80V601.32H1004.60V601.32H1006.40V601.32H1008.20V601.33H1010.00V601.33H1011.80V601.33H1013.60V601.34H1015.40V601.34H1017.20V601.35H1019.00V601.35H1020.80V601.35H1022.60V601.36H1024.40V601.36H1026.20V601.36H1028.00V601.37H1029.80V601.37H1031.60V601.38H1033.40V601.38H1035.20V601.38H1037.00V601.39H1038.80V601.39H1040.60V601.39H1042.40V601.40H1044.20V601.40H1046.00V601.41H1047.80V601.41H1049.60V601.41H1051.40V601.42H1053.20V601.42H1055.00V601.42H1056.80V601.43H1058.60V601.43H1060.40V601.44H1062.20V601.44H1064.00V601.44H1065.80V601.45H1067.60V601.45H1069.40V601.45H1071.20V601.46H1073.00V601.46H1074.80V601.47H1076.60V601.47H1078.40V601.47H1080.20V601.48H1082.00V601.48H1083.80V601.48H1085.60V601.49H1087.40V601.49H1089.20V601.50H1091.00V601.50H1092.80V601.50H1094.60V601.51H1096.40V601.51H1098.20V601.51H1100.00V601.52H1101.80V601.52H1103.60V601.53H1105.40V601.53H1107.20V601.53H1109.00V601.54H1110.80V601.54H1112.60V601.54H1114.40V601.55H1116.20V601.55H1118.00V601.56H1119.80V601.56H1121.60V601.56H1123.40V601.57H1125.20V601.57H1127.00V601.57H1128.80V601.58H1130.60V601.58H1132.40V601.59H1134.20V601.59H1136.00V601.59H1137.80V601.60H1139.60V601.60H1141.40V601.60H1143.20V601.61H1145.00V601.61H1146.80V601.62H1148.60V601.62H1150.40V601.62H1152.20V601.63H1154.00V601.63H1155.80V601.63H1157.60V601.64H1159.40V601.64H1161.20V601.65H1163.00V601.65H1164.80V601.65H1166.60V601.66H1168.40V601.66H1170.20V601.66H1172.00V601.67H1173.80V601.67H1175.60V601.68H1177.40V601.68H1179.20V601.68H1181.00V601.69H1182.80V601.69H1184.60V601.69H1186.40V601.70H1188.20V601.70H1190.00V601.71H1191.80V601.71H1193.60V601.71H1195.40V601.72H1197.20V601.72H1199.00V601.72H1200.80V601.73H1202.60V601.73H1204.40V601.74H1206.20V601.74H1208.00V601.74H1209.80V601.75H1211.60V601.75H1213.40V601.75H1215.20V601.76H1217.00V601.76H1218.80V601.77H1220.60V601.77H1222.40V601.77H1224.20V601.78H1226.00V601.78H1227.80V601.78H1229.60V601.79H1231.40V601.79H1233.20V601.80H1235.00V601.80H1236.80" fill="none" stroke="#0a0aa8" stroke-width="1.05"/>
<path d="M407.3 112.3V602.5" stroke="#6a6a6a" stroke-width="1.4"/><path d="M407 112.3H1272.5" stroke="#6a6a6a" stroke-width="1.4"/><path d="M407 602.5H1272.5V112" stroke="#1a1a1a" stroke-width="1" fill="none"/>
<line x1="407.5" y1="602.5" x2="432" y2="602.5" stroke="#1a1a1a" stroke-width="1"/>
<text x="402.1" y="609.6" font-size="20.6" fill="#000" text-anchor="end" >0</text>
<line x1="407.5" y1="588.5" x2="419.5" y2="588.5" stroke="#1a1a1a" stroke-width="1"/>
<line x1="407.5" y1="574.5" x2="419.5" y2="574.5" stroke="#1a1a1a" stroke-width="1"/>
<line x1="407.5" y1="561.5" x2="419.5" y2="561.5" stroke="#1a1a1a" stroke-width="1"/>
<line x1="407.5" y1="547.5" x2="419.5" y2="547.5" stroke="#1a1a1a" stroke-width="1"/>
<line x1="407.5" y1="534.5" x2="432" y2="534.5" stroke="#1a1a1a" stroke-width="1"/>
<text x="402.1" y="541.75" font-size="20.6" fill="#000" text-anchor="end" >5000</text>
<line x1="407.5" y1="520.5" x2="419.5" y2="520.5" stroke="#1a1a1a" stroke-width="1"/>
<line x1="407.5" y1="507.5" x2="419.5" y2="507.5" stroke="#1a1a1a" stroke-width="1"/>
<line x1="407.5" y1="493.5" x2="419.5" y2="493.5" stroke="#1a1a1a" stroke-width="1"/>
<line x1="407.5" y1="479.5" x2="419.5" y2="479.5" stroke="#1a1a1a" stroke-width="1"/>
<line x1="407.5" y1="466.5" x2="432" y2="466.5" stroke="#1a1a1a" stroke-width="1"/>
<text x="402.1" y="473.90000000000003" font-size="20.6" fill="#000" text-anchor="end" >10000</text>
<line x1="407.5" y1="452.5" x2="419.5" y2="452.5" stroke="#1a1a1a" stroke-width="1"/>
<line x1="407.5" y1="439.5" x2="419.5" y2="439.5" stroke="#1a1a1a" stroke-width="1"/>
<line x1="407.5" y1="425.5" x2="419.5" y2="425.5" stroke="#1a1a1a" stroke-width="1"/>
<line x1="407.5" y1="412.5" x2="419.5" y2="412.5" stroke="#1a1a1a" stroke-width="1"/>
<line x1="407.5" y1="398.5" x2="432" y2="398.5" stroke="#1a1a1a" stroke-width="1"/>
<text x="402.1" y="406.05" font-size="20.6" fill="#000" text-anchor="end" >15000</text>
<line x1="407.5" y1="384.5" x2="419.5" y2="384.5" stroke="#1a1a1a" stroke-width="1"/>
<line x1="407.5" y1="371.5" x2="419.5" y2="371.5" stroke="#1a1a1a" stroke-width="1"/>
<line x1="407.5" y1="357.5" x2="419.5" y2="357.5" stroke="#1a1a1a" stroke-width="1"/>
<line x1="407.5" y1="344.5" x2="419.5" y2="344.5" stroke="#1a1a1a" stroke-width="1"/>
<line x1="407.5" y1="330.5" x2="432" y2="330.5" stroke="#1a1a1a" stroke-width="1"/>
<text x="402.1" y="338.20000000000005" font-size="20.6" fill="#000" text-anchor="end" >20000</text>
<line x1="407.5" y1="317.5" x2="419.5" y2="317.5" stroke="#1a1a1a" stroke-width="1"/>
<line x1="407.5" y1="303.5" x2="419.5" y2="303.5" stroke="#1a1a1a" stroke-width="1"/>
<line x1="407.5" y1="289.5" x2="419.5" y2="289.5" stroke="#1a1a1a" stroke-width="1"/>
<line x1="407.5" y1="276.5" x2="419.5" y2="276.5" stroke="#1a1a1a" stroke-width="1"/>
<line x1="407.5" y1="262.5" x2="432" y2="262.5" stroke="#1a1a1a" stroke-width="1"/>
<text x="402.1" y="270.35" font-size="20.6" fill="#000" text-anchor="end" >25000</text>
<line x1="407.5" y1="249.5" x2="419.5" y2="249.5" stroke="#1a1a1a" stroke-width="1"/>
<line x1="407.5" y1="235.5" x2="419.5" y2="235.5" stroke="#1a1a1a" stroke-width="1"/>
<line x1="407.5" y1="222.5" x2="419.5" y2="222.5" stroke="#1a1a1a" stroke-width="1"/>
<line x1="407.5" y1="208.5" x2="419.5" y2="208.5" stroke="#1a1a1a" stroke-width="1"/>
<line x1="407.5" y1="194.5" x2="432" y2="194.5" stroke="#1a1a1a" stroke-width="1"/>
<text x="402.1" y="202.49999999999997" font-size="20.6" fill="#000" text-anchor="end" >30000</text>
<line x1="407.5" y1="181.5" x2="419.5" y2="181.5" stroke="#1a1a1a" stroke-width="1"/>
<line x1="407.5" y1="167.5" x2="419.5" y2="167.5" stroke="#1a1a1a" stroke-width="1"/>
<line x1="407.5" y1="154.5" x2="419.5" y2="154.5" stroke="#1a1a1a" stroke-width="1"/>
<line x1="407.5" y1="140.5" x2="419.5" y2="140.5" stroke="#1a1a1a" stroke-width="1"/>
<line x1="407.5" y1="127.5" x2="432" y2="127.5" stroke="#1a1a1a" stroke-width="1"/>
<text x="402.1" y="134.65" font-size="20.6" fill="#000" text-anchor="end" >35000</text>
<line x1="407.5" y1="113.5" x2="419.5" y2="113.5" stroke="#1a1a1a" stroke-width="1"/>
<line x1="407.5" y1="602.5" x2="407.5" y2="587" stroke="#1a1a1a" stroke-width="1"/>
<text x="407.2" y="622.8" font-size="20.6" fill="#000" text-anchor="middle" >0</text>
<line x1="429.5" y1="602.5" x2="429.5" y2="594.2" stroke="#1a1a1a" stroke-width="1"/>
<line x1="452.5" y1="602.5" x2="452.5" y2="594.2" stroke="#1a1a1a" stroke-width="1"/>
<line x1="474.5" y1="602.5" x2="474.5" y2="594.2" stroke="#1a1a1a" stroke-width="1"/>
<line x1="497.5" y1="602.5" x2="497.5" y2="587" stroke="#1a1a1a" stroke-width="1"/>
<text x="497.32" y="622.8" font-size="20.6" fill="#000" text-anchor="middle" >200</text>
<line x1="519.5" y1="602.5" x2="519.5" y2="594.2" stroke="#1a1a1a" stroke-width="1"/>
<line x1="542.5" y1="602.5" x2="542.5" y2="594.2" stroke="#1a1a1a" stroke-width="1"/>
<line x1="564.5" y1="602.5" x2="564.5" y2="594.2" stroke="#1a1a1a" stroke-width="1"/>
<line x1="587.5" y1="602.5" x2="587.5" y2="587" stroke="#1a1a1a" stroke-width="1"/>
<text x="587.44" y="622.8" font-size="20.6" fill="#000" text-anchor="middle" >400</text>
<line x1="609.5" y1="602.5" x2="609.5" y2="594.2" stroke="#1a1a1a" stroke-width="1"/>
<line x1="632.5" y1="602.5" x2="632.5" y2="594.2" stroke="#1a1a1a" stroke-width="1"/>
<line x1="654.5" y1="602.5" x2="654.5" y2="594.2" stroke="#1a1a1a" stroke-width="1"/>
<line x1="677.5" y1="602.5" x2="677.5" y2="587" stroke="#1a1a1a" stroke-width="1"/>
<text x="677.5600000000001" y="622.8" font-size="20.6" fill="#000" text-anchor="middle" >600</text>
<line x1="699.5" y1="602.5" x2="699.5" y2="594.2" stroke="#1a1a1a" stroke-width="1"/>
<line x1="722.5" y1="602.5" x2="722.5" y2="594.2" stroke="#1a1a1a" stroke-width="1"/>
<line x1="744.5" y1="602.5" x2="744.5" y2="594.2" stroke="#1a1a1a" stroke-width="1"/>
<line x1="767.5" y1="602.5" x2="767.5" y2="587" stroke="#1a1a1a" stroke-width="1"/>
<text x="767.6800000000001" y="622.8" font-size="20.6" fill="#000" text-anchor="middle" >800</text>
<line x1="790.5" y1="602.5" x2="790.5" y2="594.2" stroke="#1a1a1a" stroke-width="1"/>
<line x1="812.5" y1="602.5" x2="812.5" y2="594.2" stroke="#1a1a1a" stroke-width="1"/>
<line x1="835.5" y1="602.5" x2="835.5" y2="594.2" stroke="#1a1a1a" stroke-width="1"/>
<line x1="857.5" y1="602.5" x2="857.5" y2="587" stroke="#1a1a1a" stroke-width="1"/>
<text x="857.8000000000001" y="622.8" font-size="20.6" fill="#000" text-anchor="middle" >1000</text>
<line x1="880.5" y1="602.5" x2="880.5" y2="594.2" stroke="#1a1a1a" stroke-width="1"/>
<line x1="902.5" y1="602.5" x2="902.5" y2="594.2" stroke="#1a1a1a" stroke-width="1"/>
<line x1="925.5" y1="602.5" x2="925.5" y2="594.2" stroke="#1a1a1a" stroke-width="1"/>
<line x1="947.5" y1="602.5" x2="947.5" y2="587" stroke="#1a1a1a" stroke-width="1"/>
<text x="947.9200000000001" y="622.8" font-size="20.6" fill="#000" text-anchor="middle" >1200</text>
<line x1="970.5" y1="602.5" x2="970.5" y2="594.2" stroke="#1a1a1a" stroke-width="1"/>
<line x1="992.5" y1="602.5" x2="992.5" y2="594.2" stroke="#1a1a1a" stroke-width="1"/>
<line x1="1015.5" y1="602.5" x2="1015.5" y2="594.2" stroke="#1a1a1a" stroke-width="1"/>
<line x1="1037.5" y1="602.5" x2="1037.5" y2="587" stroke="#1a1a1a" stroke-width="1"/>
<text x="1038.0400000000002" y="622.8" font-size="20.6" fill="#000" text-anchor="middle" >1400</text>
<line x1="1060.5" y1="602.5" x2="1060.5" y2="594.2" stroke="#1a1a1a" stroke-width="1"/>
<line x1="1082.5" y1="602.5" x2="1082.5" y2="594.2" stroke="#1a1a1a" stroke-width="1"/>
<line x1="1105.5" y1="602.5" x2="1105.5" y2="594.2" stroke="#1a1a1a" stroke-width="1"/>
<line x1="1127.5" y1="602.5" x2="1127.5" y2="587" stroke="#1a1a1a" stroke-width="1"/>
<text x="1128.16" y="622.8" font-size="20.6" fill="#000" text-anchor="middle" >1600</text>
<line x1="1150.5" y1="602.5" x2="1150.5" y2="594.2" stroke="#1a1a1a" stroke-width="1"/>
<line x1="1173.5" y1="602.5" x2="1173.5" y2="594.2" stroke="#1a1a1a" stroke-width="1"/>
<line x1="1195.5" y1="602.5" x2="1195.5" y2="594.2" stroke="#1a1a1a" stroke-width="1"/>
<line x1="1218.5" y1="602.5" x2="1218.5" y2="587" stroke="#1a1a1a" stroke-width="1"/>
<text x="1218.28" y="622.8" font-size="20.6" fill="#000" text-anchor="middle" >1800</text>
<line x1="1240.5" y1="602.5" x2="1240.5" y2="594.2" stroke="#1a1a1a" stroke-width="1"/>
<line x1="1263.5" y1="602.5" x2="1263.5" y2="594.2" stroke="#1a1a1a" stroke-width="1"/>
<rect x="1142.5" y="91.5" width="216" height="97.5" fill="#fff" stroke="#000" stroke-width="1"/>
<line x1="1142.5" y1="115.5" x2="1358.5" y2="115.5" stroke="#000" stroke-width="1"/>
<text x="1250.5" y="110.2" font-size="21" fill="#000" text-anchor="middle" >histo0_Q</text>
<text x="1153.3" y="135.70000000000002" font-size="21" fill="#000" text-anchor="start" >Entries</text>
<text x="1348.9" y="135.70000000000002" font-size="21" fill="#000" text-anchor="end" >1903658</text>
<text x="1153.3" y="160.4" font-size="21" fill="#000" text-anchor="start" >Mean</text>
<text x="1348.9" y="160.4" font-size="21" fill="#000" text-anchor="end" >646.2</text>
<text x="1153.3" y="184.70000000000002" font-size="21" fill="#000" text-anchor="start" >Std Dev</text>
<text x="1348.9" y="184.70000000000002" font-size="21" fill="#000" text-anchor="end" >249</text>
</g>
</svg>
</body></html>
